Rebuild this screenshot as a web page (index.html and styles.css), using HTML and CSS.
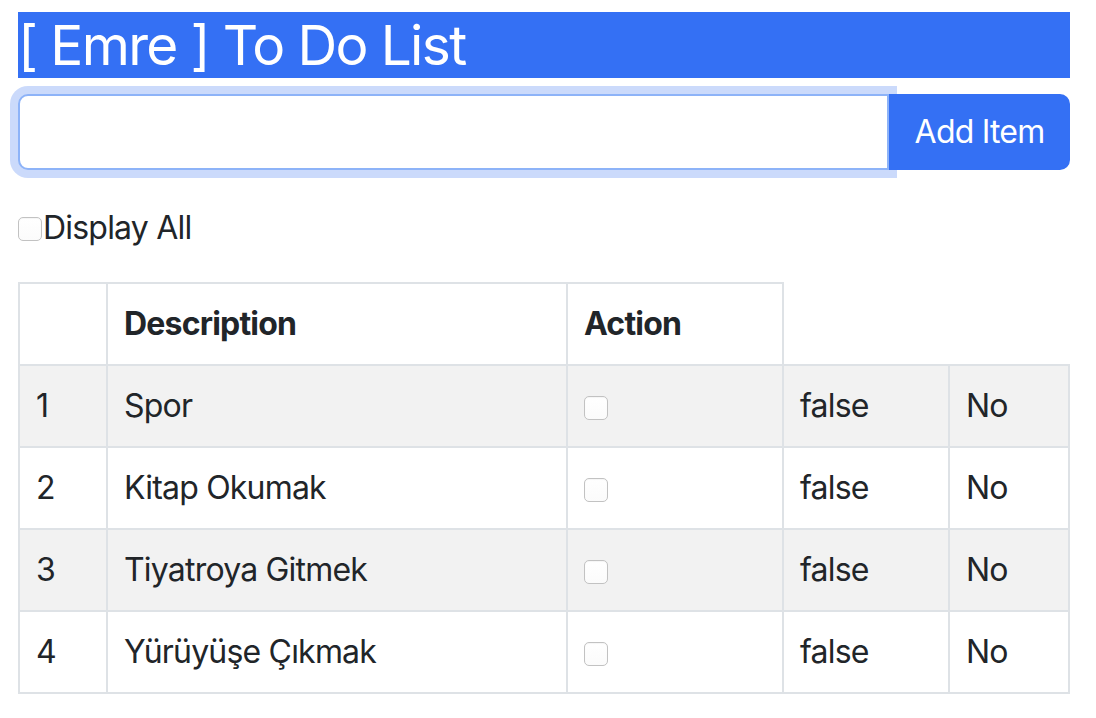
FILE: index.html
```html
<!DOCTYPE html>
<html lang="tr">
<head>
<meta charset="utf-8">
<title>To Do List</title>
<link rel="stylesheet" href="styles.css">
</head>
<body>
<div class="page">
  <h1 class="title">[ Emre ] To Do List</h1>
  <div class="input-group">
    <input class="form-control" type="text">
    <button class="btn">Add Item</button>
  </div>
  <label class="display-all"><input type="checkbox" class="check">Display All</label>
  <table class="todo">
    <colgroup>
      <col class="c-num">
      <col class="c-desc">
      <col class="c-act">
      <col class="c-bool">
      <col class="c-no">
    </colgroup>
    <thead>
      <tr>
        <th></th>
        <th>Description</th>
        <th>Action</th>
      </tr>
    </thead>
    <tbody>
      <tr class="odd"><td>1</td><td>Spor</td><td><input type="checkbox" class="check cell-check"></td><td>false</td><td>No</td></tr>
      <tr><td>2</td><td>Kitap Okumak</td><td><input type="checkbox" class="check cell-check"></td><td>false</td><td>No</td></tr>
      <tr class="odd"><td>3</td><td>Tiyatroya Gitmek</td><td><input type="checkbox" class="check cell-check"></td><td>false</td><td>No</td></tr>
      <tr><td>4</td><td>Yürüyüşe Çıkmak</td><td><input type="checkbox" class="check cell-check"></td><td>false</td><td>No</td></tr>
    </tbody>
  </table>
</div>
</body>
</html>
```

FILE: styles.css
```css
html, body {
  margin: 0;
  padding: 0;
  background: #ffffff;
}

body {
  font-family: Inter, "Noto Sans", "Liberation Sans", sans-serif;
  font-size: 32px;
  line-height: 48px;
  letter-spacing: -0.025em;
  color: #212529;
}

.page {
  padding: 12px 26px 0 18px;
}

.title {
  margin: 0;
  background: #3470f4;
  color: #ffffff;
  font-size: 55px;
  line-height: 66px;
  font-weight: 400;
  letter-spacing: -0.03em;
  white-space: nowrap;
}

.input-group {
  margin-top: 16px;
  display: flex;
  height: 76px;
}

.form-control {
  flex: 1;
  margin: 0;
  box-sizing: border-box;
  height: 76px;
  border: 2px solid #8db3f8;
  border-radius: 10px 0 0 10px;
  box-shadow: 0 0 0 8px #cbdafb;
  background: #ffffff;
  outline: none;
  font: inherit;
  padding: 0 24px;
}

.btn {
  position: relative;
  z-index: 1;
  box-sizing: border-box;
  width: 181px;
  height: 76px;
  margin: 0;
  border: 2px solid #3470f4;
  background: #3470f4;
  color: #ffffff;
  border-radius: 0 10px 10px 0;
  font: inherit;
  letter-spacing: -0.025em;
  white-space: nowrap;
  padding: 0 20px;
}

.display-all {
  display: block;
  margin-top: 34px;
  height: 48px;
}

.check {
  appearance: none;
  -webkit-appearance: none;
  box-sizing: border-box;
  width: 24px;
  height: 24px;
  margin: 0 1px 0 0;
  border: 1.5px solid #c2c2c2;
  border-radius: 5px;
  background: linear-gradient(#ffffff, #fbfbfb);
  box-shadow: inset 0 1px 1px rgba(0, 0, 0, 0.04);
  vertical-align: -2px;
}

.todo {
  margin: 30px 0 0 0;
  width: 1050px;
  table-layout: fixed;
  border-collapse: collapse;
}

.todo th,
.todo td {
  border: 2px solid #dee2e6;
  padding: 16px 16px;
  text-align: left;
  vertical-align: top;
  height: 48px;
}

.todo th {
  font-weight: 700;
}

.c-num { width: 88px; }
.c-desc { width: 460px; }
.c-act { width: 216px; }
.c-bool { width: 166px; }
.c-no { width: 120px; }

.todo tr.odd td {
  background: #f2f2f2;
}

.cell-check {
  margin: 0;
  vertical-align: -3px;
}
```
